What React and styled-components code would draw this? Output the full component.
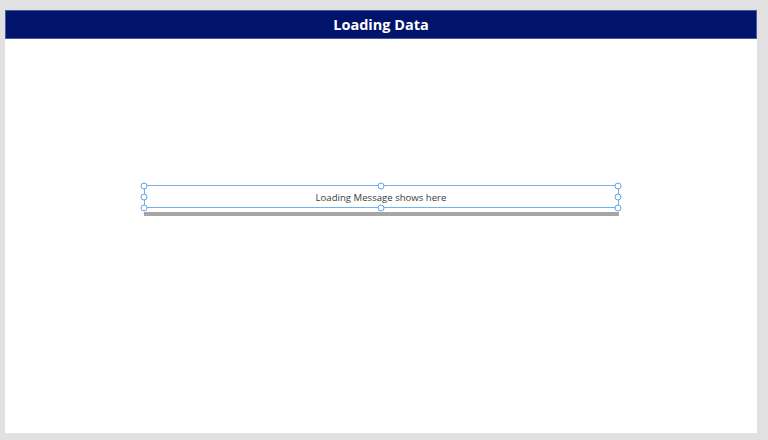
import React from "react";
import styled, { createGlobalStyle } from "styled-components";

const Global = createGlobalStyle`
  html, body { margin: 0; padding: 0; background: #e1e1e1; }
  body { font-family: "Open Sans", "Liberation Sans", sans-serif; }
`;

const Page = styled.div`
  width: 768px;
  height: 440px;
  box-sizing: border-box;
  padding: 10px 11px 7px 5px;
  display: flex;
`;

const Canvas = styled.div`
  flex: 1;
  background: #ffffff;
  display: flex;
  flex-direction: column;
`;

const Header = styled.div`
  height: 29px;
  box-sizing: border-box;
  background: #00146b;
  border: 1px solid #4a5aa0;
  display: flex;
  align-items: center;
  justify-content: center;
  color: #ffffff;
  font-weight: 700;
  font-size: 14.5px;
`;

const Body = styled.div`
  flex: 1;
  display: flex;
  flex-direction: column;
  align-items: center;
  padding-top: 146px;
`;

const Loader = styled.div`
  width: 475px;
  display: flex;
  flex-direction: column;
  gap: 4px;
`;

const Selected = styled.div`
  position: relative;
  height: 23px;
  box-sizing: border-box;
  border: 1px solid #72b0ee;
  display: flex;
  align-items: center;
  justify-content: center;
  padding-top: 1px;
  color: #404040;
  font-size: 9.6px;
`;

const Handle = styled.span`
  position: absolute;
  width: 5px;
  height: 5px;
  border: 1.2px solid #5ea4ea;
  border-radius: 50%;
  background: #ffffff;
  left: ${(p) => p.$x};
  top: ${(p) => p.$y};
  transform: translate(-50%, -50%);
`;

const Bar = styled.div`
  height: 4px;
  background: #a6a6a6;
`;

const handles = [
  ["-0.5px", "-0.5px"],
  ["50%", "-0.5px"],
  ["calc(100% + 0.5px)", "-0.5px"],
  ["-0.5px", "50%"],
  ["calc(100% + 0.5px)", "50%"],
  ["-0.5px", "calc(100% + 0.5px)"],
  ["50%", "calc(100% + 0.5px)"],
  ["calc(100% + 0.5px)", "calc(100% + 0.5px)"],
];

export default function App() {
  return (
    <>
      <Global />
      <Page>
        <Canvas>
          <Header>Loading Data</Header>
          <Body>
            <Loader>
              <Selected>
                Loading Message shows here
                {handles.map(([x, y], i) => (
                  <Handle key={i} $x={x} $y={y} />
                ))}
              </Selected>
              <Bar />
            </Loader>
          </Body>
        </Canvas>
      </Page>
    </>
  );
}
